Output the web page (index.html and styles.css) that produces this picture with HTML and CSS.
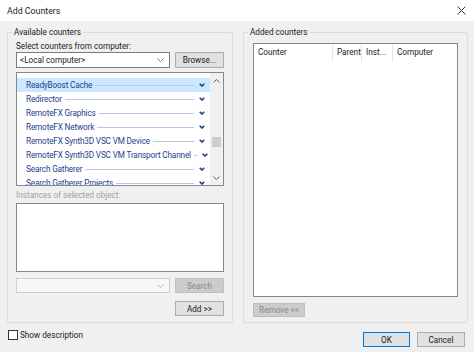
FILE: index.html
```html
<!DOCTYPE html>
<html lang="en">
<head>
    <meta charset="UTF-8">
    <title>Add Counters</title>
    <link rel="stylesheet" href="styles.css">
</head>
<body>
    <div class="window">
        <!-- title bar -->
        <div class="titlebar">
            <span class="title">Add Counters</span>
            <svg class="close" width="9" height="9" viewBox="0 0 9 9">
                <path d="M0.5 0.5 L8.5 8.5 M8.5 0.5 L0.5 8.5" stroke="#333" stroke-width="1" fill="none"/>
            </svg>
        </div>

        <div class="client">
            <div class="groups">
                <!-- available counters -->
                <fieldset class="group group-left">
                    <legend>Available counters</legend>
                    <div class="label">Select counters from computer:</div>
                    <div class="row">
                        <div class="combo">
                            <span>&lt;Local computer&gt;</span>
                            <svg width="7" height="4" viewBox="0 0 7 4"><path d="M0.5 0.5 L3.5 3.5 L6.5 0.5" stroke="#777" fill="none"/></svg>
                        </div>
                        <button class="btn btn-side">Browse...</button>
                    </div>

                    <div class="counter-list">
                        <div class="rows">
                            <div class="item selected"><span class="name">ReadyBoost Cache</span><span class="rule"></span><svg class="chev" width="6" height="4" viewBox="0 0 6 4"><path d="M0.7 0.7 L3 3 L5.3 0.7" stroke="#1e3d8f" stroke-width="1.6" fill="none"/></svg></div>
                            <div class="item"><span class="name">Redirector</span><span class="rule"></span><svg class="chev" width="6" height="4" viewBox="0 0 6 4"><path d="M0.7 0.7 L3 3 L5.3 0.7" stroke="#1e3d8f" stroke-width="1.6" fill="none"/></svg></div>
                            <div class="item"><span class="name">RemoteFX Graphics</span><span class="rule"></span><svg class="chev" width="6" height="4" viewBox="0 0 6 4"><path d="M0.7 0.7 L3 3 L5.3 0.7" stroke="#1e3d8f" stroke-width="1.6" fill="none"/></svg></div>
                            <div class="item"><span class="name">RemoteFX Network</span><span class="rule"></span><svg class="chev" width="6" height="4" viewBox="0 0 6 4"><path d="M0.7 0.7 L3 3 L5.3 0.7" stroke="#1e3d8f" stroke-width="1.6" fill="none"/></svg></div>
                            <div class="item"><span class="name">RemoteFX Synth3D VSC VM Device</span><span class="rule"></span><svg class="chev" width="6" height="4" viewBox="0 0 6 4"><path d="M0.7 0.7 L3 3 L5.3 0.7" stroke="#1e3d8f" stroke-width="1.6" fill="none"/></svg></div>
                            <div class="item"><span class="name">RemoteFX Synth3D VSC VM Transport Channel</span><span class="rule"></span><svg class="chev" width="6" height="4" viewBox="0 0 6 4"><path d="M0.7 0.7 L3 3 L5.3 0.7" stroke="#1e3d8f" stroke-width="1.6" fill="none"/></svg></div>
                            <div class="item"><span class="name">Search Gatherer</span><span class="rule"></span><svg class="chev" width="6" height="4" viewBox="0 0 6 4"><path d="M0.7 0.7 L3 3 L5.3 0.7" stroke="#1e3d8f" stroke-width="1.6" fill="none"/></svg></div>
                            <div class="item"><span class="name">Search Gatherer Projects</span><span class="rule"></span><svg class="chev" width="6" height="4" viewBox="0 0 6 4"><path d="M0.7 0.7 L3 3 L5.3 0.7" stroke="#1e3d8f" stroke-width="1.6" fill="none"/></svg></div>
                        </div>
                        <div class="scrollbar">
                            <svg width="7" height="4" viewBox="0 0 7 4"><path d="M0.5 3.5 L3.5 0.5 L6.5 3.5" stroke="#606060" fill="none"/></svg>
                            <div class="track"><div class="thumb"></div></div>
                            <svg width="7" height="4" viewBox="0 0 7 4"><path d="M0.5 0.5 L3.5 3.5 L6.5 0.5" stroke="#606060" fill="none"/></svg>
                        </div>
                    </div>

                    <div class="label label-off">Instances of selected object:</div>
                    <div class="instances"></div>

                    <div class="row row-search">
                        <div class="combo combo-off">
                            <span></span>
                            <svg width="7" height="4" viewBox="0 0 7 4"><path d="M0.5 0.5 L3.5 3.5 L6.5 0.5" stroke="#bbb" fill="none"/></svg>
                        </div>
                        <button class="btn btn-side btn-off">Search</button>
                    </div>
                    <div class="row row-add">
                        <button class="btn btn-side">Add &gt;&gt;</button>
                    </div>
                </fieldset>

                <!-- added counters -->
                <fieldset class="group group-right">
                    <legend>Added counters</legend>
                    <div class="added-list">
                        <div class="header">
                            <div class="col col-counter">Counter</div>
                            <div class="col col-parent">Parent</div>
                            <div class="col col-inst">Inst...</div>
                            <div class="col col-computer">Computer</div>
                        </div>
                    </div>
                    <button class="btn btn-remove btn-off">Remove &lt;&lt;</button>
                </fieldset>
            </div>

            <!-- footer -->
            <div class="footer">
                <label class="check"><span class="box"></span>Show description</label>
                <div class="actions">
                    <button class="btn btn-action btn-primary">OK</button>
                    <button class="btn btn-action">Cancel</button>
                </div>
            </div>
        </div>
    </div>
</body>
</html>
```

FILE: styles.css
```css
* {
    box-sizing: border-box;
    margin: 0;
    padding: 0;
}

body {
    font-family: Roboto, "Open Sans", sans-serif;
    font-size: 8.2px;
    line-height: 12px;
    color: #1a1a1a;
    background: #fff;
    width: 474px;
    height: 355px;
    overflow: hidden;
}

/* window frame */
.window {
    width: 474px;
}

.titlebar {
    height: 21px;
    display: flex;
    align-items: center;
    justify-content: space-between;
    padding: 0 8px 0 7px;
    background: #fff;
}

.title {
    font-size: 8.8px;
    color: #222;
}

.client {
    height: 331px;
    background: #f0f0f0;
    padding: 5px 6px 0 7px;
}

.groups {
    display: flex;
    gap: 10px;
    height: 297px;
}

/* group boxes */
.group {
    border: 1px solid #dcdcdc;
    border-radius: 2px;
    display: flex;
    flex-direction: column;
    padding: 0 8px 4px 8px;
    min-width: 0;
}

.group legend {
    margin-left: -4px;
    padding: 0 2px;
    line-height: 12px;
}

.group-left {
    width: 226px;
    flex: none;
}

.group-right {
    flex: 1;
    padding-left: 9px;
    padding-right: 9px;
}

.group-right legend {
    margin-left: -5px;
}

.label {
    margin-top: 2px;
    line-height: 12px;
}

.label-off {
    color: #a0a0a0;
    margin-top: 3px;
}

.row {
    display: flex;
    gap: 5px;
    height: 16px;
}

/* combo boxes */
.combo {
    flex: 1;
    min-width: 0;
    background: #fff;
    border: 1px solid #7a7a7a;
    display: flex;
    align-items: center;
    justify-content: space-between;
    padding: 0 5px 0 3px;
}

.combo-off {
    border-color: #cfcfcf;
    background: #f7f7f7;
}

/* buttons */
.btn {
    font-family: inherit;
    font-size: 8.2px;
    color: #1a1a1a;
    background: #e1e1e1;
    border: 1px solid #adadad;
    height: 15px;
    line-height: 12px;
}

.btn-side {
    width: 49px;
    height: 16px;
    flex: none;
}

.btn-off {
    background: #cccccc;
    border-color: #bfbfbf;
    color: #8a8a8a;
}

.row-search {
    margin-top: 6px;
    height: 15px;
}

.row-search .btn {
    height: 15px;
}

.row-add {
    margin-top: 8px;
    justify-content: flex-end;
    height: 15px;
}

.row-add .btn {
    height: 15px;
}

/* counter list */
.counter-list {
    margin-top: 4px;
    height: 114px;
    border: 1px solid #828790;
    background: #fff;
    display: flex;
    overflow: hidden;
}

.rows {
    flex: 1;
    min-width: 0;
    padding-top: 5px;
}

.item {
    height: 14px;
    display: flex;
    align-items: center;
    padding: 0 3px 0 9px;
    color: #1e3d8f;
}

.item.selected {
    background: #cce8ff;
}

.item .name {
    white-space: nowrap;
    letter-spacing: -0.15px;
}

.item .rule {
    flex: 1;
    min-width: 3px;
    height: 1px;
    background: #bcc8e2;
    margin: 0 3px;
}

.item .chev {
    flex: none;
    margin: 0 2px 0 2px;
}

.scrollbar {
    width: 13px;
    flex: none;
    background: #f0f0f0;
    display: flex;
    flex-direction: column;
    align-items: center;
    padding: 6px 0 5px 0;
}

.scrollbar .track {
    flex: 1;
    width: 100%;
    display: flex;
    justify-content: center;
    padding-top: 54px;
}

.scrollbar .thumb {
    width: 9px;
    height: 10px;
    background: #cdcdcd;
}

.instances {
    margin-top: 2px;
    height: 69px;
    border: 1px solid #828790;
    background: #fff;
}

/* added counters list */
.added-list {
    margin-top: 5px;
    height: 254px;
    border: 1px solid #828790;
    background: #fff;
}

.header {
    display: flex;
    height: 18px;
}

.col {
    padding-left: 4px;
    line-height: 17px;
    border-right: 1px solid #e5e5e5;
    white-space: nowrap;
    overflow: hidden;
}

.col-counter {
    width: 79px;
}

.col-parent {
    width: 29px;
}

.col-inst {
    width: 31px;
}

.col-computer {
    flex: 1;
    border-right: none;
}

.btn-remove {
    margin-top: 6px;
    width: 52px;
    height: 14px;
}

/* footer */
.footer {
    display: flex;
    justify-content: space-between;
    padding-right: 3px;
}

.check {
    display: flex;
    align-items: center;
    gap: 2px;
    margin-top: 7px;
    margin-left: 1px;
    height: 10px;
}

.check .box {
    width: 10px;
    height: 10px;
    border: 1px solid #333;
    background: #fff;
}

.actions {
    display: flex;
    gap: 7px;
    margin-top: 9px;
}

.btn-action {
    width: 48px;
    height: 15px;
}

.btn-primary {
    border: 1px solid #0078d7;
    width: 47px;
}
```
